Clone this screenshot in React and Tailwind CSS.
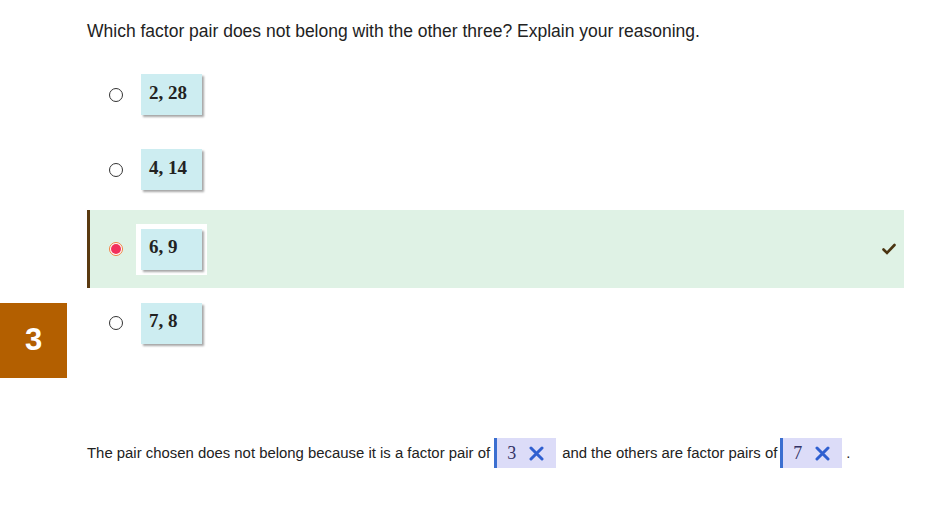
export default function App() {
  const options = [
    { label: "2, 28", h: "h-[75px]" },
    { label: "4, 14", h: "h-[75px]" },
    { label: "6, 9", h: "h-[78px] mt-[3px]", selected: true },
    { label: "7, 8", h: "h-[70px]" },
  ];

  const mathFont = { fontFamily: '"Liberation Serif", "DejaVu Serif", serif' };

  function Blank({ value }) {
    return (
      <span className="inline-flex items-center h-[30px] bg-[#dcdcf8] border-l-[3px] border-[#3b6fd0] pl-[10px] pr-[12px] gap-[13px] align-middle">
        <span className="text-[18px] text-[#333366]" style={mathFont}>{value}</span>
        <svg width="15" height="15" viewBox="0 0 15 15">
          <path d="M2 2 L13 13 M13 2 L2 13" stroke="#2f5fd0" strokeWidth="3" strokeLinecap="round" />
        </svg>
      </span>
    );
  }

  return (
    <div className="w-[938px] h-[508px] bg-white relative font-['Liberation_Sans',Arial,sans-serif] text-[#222]">
      <div className="absolute left-0 top-[303px] w-[67px] h-[75px] bg-[#b35f00] flex items-center justify-center text-white text-[31px] font-bold">
        3
      </div>

      <div className="pl-[87px] pr-[34px] pt-[20px]">
        <p className="text-[17.5px] leading-[22px]">
          Which factor pair does not belong with the other three? Explain your reasoning.
        </p>

        <div className="mt-[15px] flex flex-col">
          {options.map((o) => (
            <div
              key={o.label}
              className={
                o.h + " flex items-center " +
                (o.selected ? "bg-[#dff2e5] border-l-[3px] border-[#5a3a10] pl-[19px]" : "pl-[22px]")
              }
            >
              {o.selected ? (
                <span className="w-[14px] h-[14px] rounded-full border border-[#f08040] bg-white flex items-center justify-center">
                  <span className="w-[10px] h-[10px] rounded-full bg-[#f2305c]" />
                </span>
              ) : (
                <span className="w-[14px] h-[14px] rounded-full border border-[#333] bg-white" />
              )}
              <div className={"ml-[13px] " + (o.selected ? "bg-white p-[5px]" : "p-[5px]")}>
                <div className="w-[61px] h-[41px] bg-[#cdedf1] shadow-[2px_2px_2px_rgba(0,0,0,0.35)] flex items-center pl-[8px] pb-[3px]">
                  <span className="text-[19px] font-bold text-[#222]" style={mathFont}>{o.label}</span>
                </div>
              </div>
              {o.selected && (
                <svg className="ml-auto mr-[8px]" width="14" height="12" viewBox="0 0 14 12">
                  <path d="M1.5 6.5 L5 10 L12.5 2" fill="none" stroke="#4a3410" strokeWidth="2.6" strokeLinecap="round" />
                </svg>
              )}
            </div>
          ))}
        </div>

        <p className="mt-[80px] text-[14.9px] text-[#222] flex items-center">
          The pair chosen does not belong because it is a factor pair of
          <span className="ml-[4px] mr-[6px]"><Blank value="3" /></span>
          and the others are factor pairs of
          <span className="ml-[3px] mr-[4px]"><Blank value="7" /></span>.
        </p>
      </div>
    </div>
  );
}
